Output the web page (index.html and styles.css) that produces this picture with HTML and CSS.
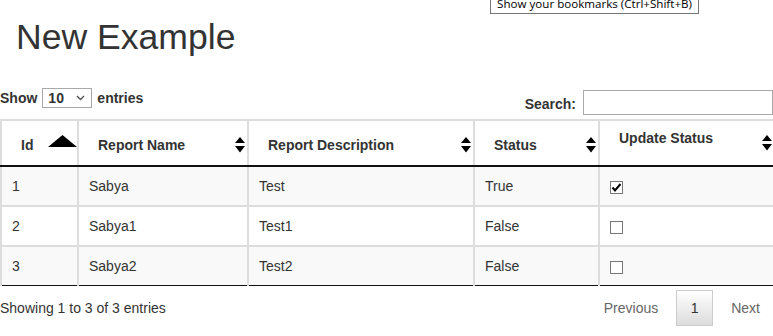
FILE: index.html
```html
<!DOCTYPE html>
<html>
  <head>
    <title>New Example</title>
    <meta charset="utf-8" />
    <link rel="stylesheet" href="styles.css">
  </head>
  <body>
    <div class="tooltip">Show your bookmarks (Ctrl+Shift+B)</div>

    <h1 class="title">New Example</h1>

    <div class="wrapper">
      <div class="controls">
        <label class="length">
          Show
          <span class="select">10
            <svg width="9" height="6" viewBox="0 0 9 6"><path d="M1 1 L4.5 4.5 L8 1" fill="none" stroke="#555" stroke-width="1.4"/></svg>
          </span>
          entries
        </label>
        <label class="search">
          Search:
          <input type="text" />
        </label>
      </div>

      <table class="report-table">
        <thead>
          <tr>
            <th class="col-id">Id
              <svg class="sort-asc" width="29" height="12" viewBox="0 0 29 12"><path d="M14.5 0 L29 12 L0 12 Z" fill="#000"/></svg>
            </th>
            <th class="col-name">Report Name
              <svg class="sort" width="10" height="16" viewBox="0 0 10 16"><path d="M5 0 L10 6 L0 6 Z M0 9 L10 9 L5 15.5 Z" fill="#000"/></svg>
            </th>
            <th class="col-desc">Report Description
              <svg class="sort" width="10" height="16" viewBox="0 0 10 16"><path d="M5 0 L10 6 L0 6 Z M0 9 L10 9 L5 15.5 Z" fill="#000"/></svg>
            </th>
            <th class="col-status">Status
              <svg class="sort" width="10" height="16" viewBox="0 0 10 16"><path d="M5 0 L10 6 L0 6 Z M0 9 L10 9 L5 15.5 Z" fill="#000"/></svg>
            </th>
            <th class="col-update"><span class="up-label">Update Status</span>
              <svg class="sort" width="10" height="16" viewBox="0 0 10 16"><path d="M5 0 L10 6 L0 6 Z M0 9 L10 9 L5 15.5 Z" fill="#000"/></svg>
            </th>
          </tr>
        </thead>
        <tbody>
          <tr class="odd">
            <td>1</td>
            <td>Sabya</td>
            <td>Test</td>
            <td>True</td>
            <td><span class="check checked"><svg width="11" height="11" viewBox="0 0 11 11"><path d="M1.5 5.5 L4 8.5 L9.5 2" fill="none" stroke="#000" stroke-width="2"/></svg></span></td>
          </tr>
          <tr>
            <td>2</td>
            <td>Sabya1</td>
            <td>Test1</td>
            <td>False</td>
            <td><span class="check"></span></td>
          </tr>
          <tr class="odd">
            <td>3</td>
            <td>Sabya2</td>
            <td>Test2</td>
            <td>False</td>
            <td><span class="check"></span></td>
          </tr>
        </tbody>
      </table>

      <div class="footer">
        <div class="info">Showing 1 to 3 of 3 entries</div>
        <div class="paginate">
          <span class="page-link">Previous</span>
          <span class="page-current">1</span>
          <span class="page-link">Next</span>
        </div>
      </div>
    </div>
  </body>
</html>
```

FILE: styles.css
```css
body {
  margin: 0;
  font-family: "Liberation Sans", Arial, sans-serif;
  color: #333;
  background: #fff;
  overflow: hidden;
  position: relative;
}

.tooltip {
  position: absolute;
  left: 490px;
  top: -7px;
  width: 207px;
  height: 19px;
  border: 1px solid #767676;
  background: #fff;
  font-family: "Open Sans", sans-serif;
  font-size: 11.6px;
  line-height: 19px;
  color: #000;
  text-align: center;
  white-space: nowrap;
}

.title {
  margin: 17px 0 0 16px;
  font-size: 35.6px;
  font-weight: normal;
  line-height: 41px;
}

.wrapper {
  width: 773px;
  margin-top: 30px;
}

.controls {
  display: flex;
  justify-content: space-between;
  align-items: flex-start;
  height: 31px;
  font-size: 14px;
  font-weight: bold;
}

.length {
  display: flex;
  align-items: center;
  height: 20px;
  gap: 5px;
}

.select {
  display: inline-flex;
  justify-content: space-between;
  align-items: center;
  box-sizing: border-box;
  width: 50px;
  height: 20px;
  border: 1px solid #a9a9a9;
  padding: 0 6px 0 5px;
  font-weight: bold;
}

.search {
  display: flex;
  align-items: center;
  gap: 7px;
  height: 25px;
  padding-top: 3px;
}

.search input {
  box-sizing: border-box;
  width: 190px;
  height: 25px;
  margin: -3px 0 0;
  border: 1px solid #a9a9a9;
}

.report-table {
  width: 782px;
  border-collapse: collapse;
  font-size: 14px;
  table-layout: fixed;
}

.report-table th {
  position: relative;
  height: 40px;
  padding: 4px 0 0 19px;
  text-align: left;
  font-weight: bold;
  border-top: 2px solid #ddd;
  border-left: 2px solid #ddd;
  border-bottom: 2px solid #111;
}

.col-id { width: 56px; }
.col-name { width: 149px; }
.col-desc { width: 205px; }
.col-status { width: 104px; }

.up-label {
  position: relative;
  top: -7px;
}

.sort,
.sort-asc {
  position: absolute;
  right: 2px;
  top: 16px;
}

.sort-asc {
  right: 0;
  top: 14px;
}

.col-update .sort {
  top: 14px;
  right: 10px;
}

.report-table td {
  height: 38px;
  padding: 0 0 0 10px;
  border: 2px solid #ddd;
  border-right: 0;
}

.report-table tbody tr:last-child td {
  border-bottom: 1px solid #111;
}

.report-table tr.odd td {
  background: #f9f9f9;
}

.check {
  display: inline-flex;
  justify-content: center;
  align-items: center;
  box-sizing: border-box;
  width: 13px;
  height: 13px;
  border: 1px solid #767676;
  background: #fff;
  vertical-align: middle;
}

.footer {
  display: flex;
  justify-content: space-between;
  align-items: flex-start;
  font-size: 14px;
  padding-top: 4px;
}

.info {
  padding-top: 10px;
}

.paginate {
  display: flex;
  align-items: center;
  margin-right: 1px;
}

.page-link {
  padding: 9px 12px;
  color: #666;
}

.page-current {
  box-sizing: border-box;
  width: 37px;
  height: 36px;
  line-height: 34px;
  text-align: center;
  border: 1px solid #ccc;
  background: linear-gradient(#fff, #dcdcdc);
  color: #333;
  margin: 0 6px;
}
```
